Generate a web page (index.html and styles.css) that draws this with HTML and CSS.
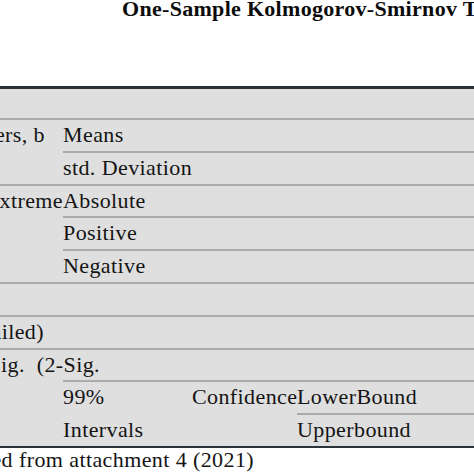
FILE: index.html
```html
<!DOCTYPE html>
<html>
<head>
<meta charset="utf-8">
<link rel="stylesheet" href="styles.css">
</head>
<body>
<div class="title">One-Sample Kolmogorov-Smirnov Test</div>
<div class="table">
  <div class="head"></div>
  <div class="row full">
    <div class="c1 pr18"><span>Normal Parameters, b</span></div>
    <div class="c2">Means</div><div class="c3"></div><div class="c4"></div>
  </div>
  <div class="row part63">
    <div class="c1"></div>
    <div class="c2">std. Deviation</div><div class="c3"></div><div class="c4"></div>
  </div>
  <div class="row full">
    <div class="c1 pr0"><span>Most Extreme</span></div>
    <div class="c2">Absolute</div><div class="c3"></div><div class="c4"></div>
  </div>
  <div class="row part63">
    <div class="c1"></div>
    <div class="c2">Positive</div><div class="c3"></div><div class="c4"></div>
  </div>
  <div class="row part63">
    <div class="c1"></div>
    <div class="c2">Negative</div><div class="c3"></div><div class="c4"></div>
  </div>
  <div class="row full">
    <div class="c1"></div><div class="c2"></div><div class="c3"></div><div class="c4"></div>
  </div>
  <div class="row full">
    <div class="c1 pr19"><span>Asymp. Sig. (2-tailed)</span></div>
    <div class="c2"></div><div class="c3"></div><div class="c4"></div>
  </div>
  <div class="row full">
    <div class="c1 span2 pr92"><span>Monte Carlo Sig.&nbsp; (2-Sig.</span></div>
    <div class="c3"></div><div class="c4"></div>
  </div>
  <div class="row part63">
    <div class="c1"></div>
    <div class="c2">99%</div><div class="c3">Confidence</div><div class="c4">LowerBound</div>
  </div>
  <div class="row part297">
    <div class="c1"></div>
    <div class="c2">Intervals</div><div class="c3"></div><div class="c4">Upperbound</div>
  </div>
</div>
<div class="foot">
  <div class="foot-a"><span>Source: Compiled</span></div>
  <div class="foot-b">from attachment 4 (2021)</div>
</div>
</body>
</html>
```
FILE: styles.css
```css
html, body {
  margin: 0;
  padding: 0;
  overflow: hidden;
  background: #ffffff;
}
body {
  font-family: "Liberation Serif", "Times New Roman", serif;
  color: #141414;
  width: 474px;
  height: 474px;
}
.title {
  font-weight: bold;
  font-size: 22px;
  line-height: 22px;
  letter-spacing: 0.3px;
  white-space: nowrap;
  padding-left: 122px;
  margin-top: -2px;
  color: #0c0c0c;
}
.table {
  margin-top: 66px;
  background: #dfdfdf;
  border-top: 3px solid #2c3338;
  border-bottom: 2px solid #2c3338;
  font-size: 22px;
  letter-spacing: 0.4px;
}
.head {
  height: 29px;
}
.row {
  display: grid;
  grid-template-columns: 63px 129px 105px 1fr;
  height: 32.8px;
  line-height: 30.8px;
  white-space: nowrap;
}
.row > div {
  border-top: 2px solid transparent;
}
.row.full > div {
  border-top-color: #ababab;
}
.row.part63 > .c2,
.row.part63 > .c3,
.row.part63 > .c4 {
  border-top-color: #ababab;
}
.row.part297 > .c4 {
  border-top-color: #ababab;
}
.c1 {
  display: flex;
  justify-content: flex-end;
}
.span2 {
  grid-column: 1 / 3;
}
.pr0 { padding-right: 0; }
.pr18 { padding-right: 18px; }
.pr19 { padding-right: 19px; }
.pr92 { padding-right: 92px; }
.foot {
  display: flex;
  font-size: 22px;
  line-height: 22px;
  letter-spacing: 0.4px;
  white-space: nowrap;
  margin-top: 1px;
}
.foot-a {
  width: 13px;
  display: flex;
  justify-content: flex-end;
  padding-right: 6px;
}
```
